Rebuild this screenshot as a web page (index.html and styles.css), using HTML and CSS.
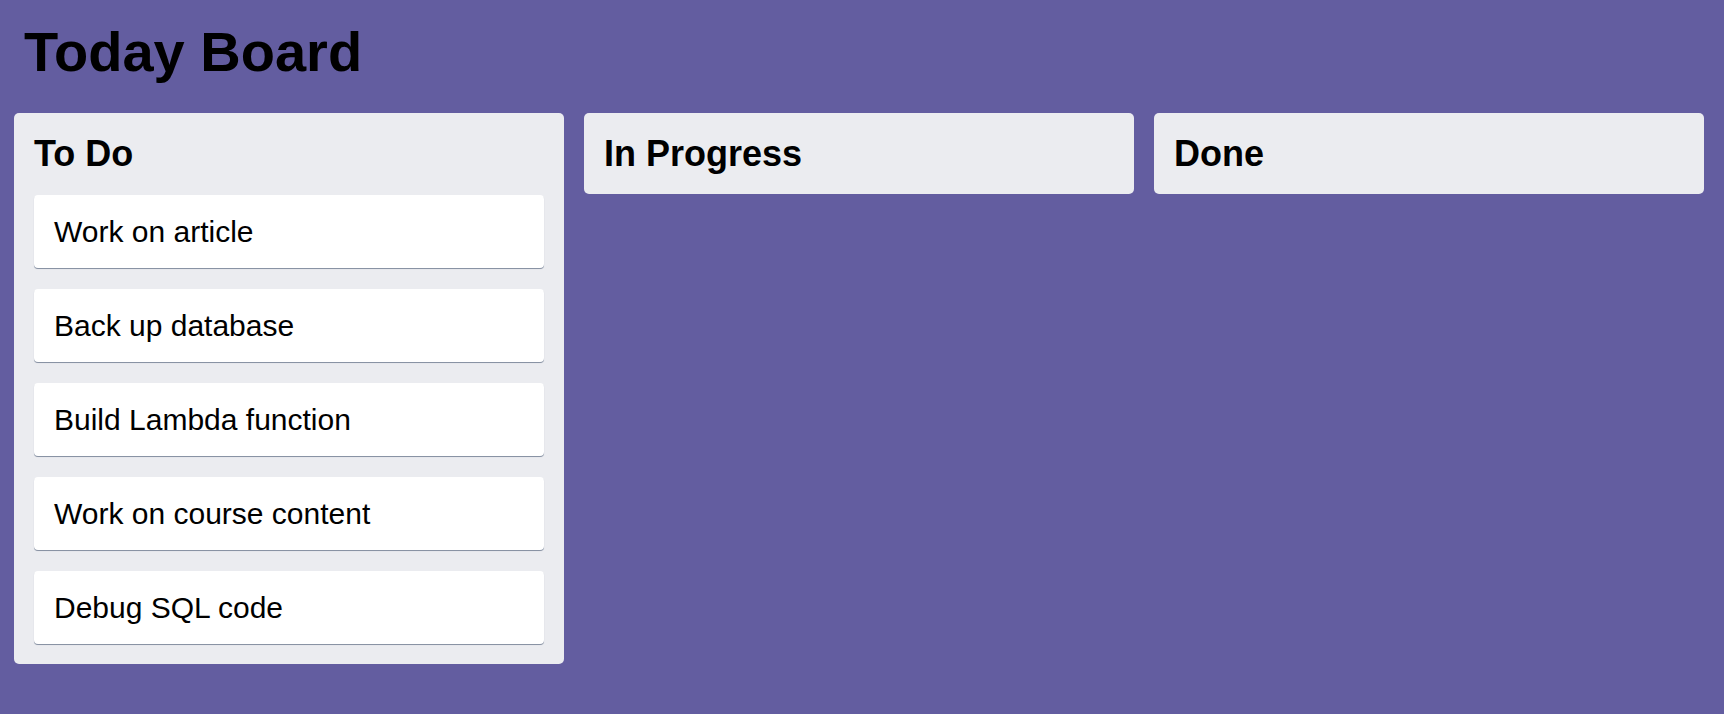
FILE: index.html
```html
<!DOCTYPE html>
<html lang="en">
<head>
<meta charset="utf-8">
<title>Today Board</title>
<link rel="stylesheet" href="styles.css">
</head>
<body>
<div class="page">
  <h1 class="board-title">Today Board</h1>
  <div class="board">
    <section class="column">
      <h2 class="column-title">To Do</h2>
      <div class="cards">
        <div class="card">Work on article</div>
        <div class="card">Back up database</div>
        <div class="card">Build Lambda function</div>
        <div class="card">Work on course content</div>
        <div class="card">Debug SQL code</div>
      </div>
    </section>
    <section class="column">
      <h2 class="column-title">In Progress</h2>
      <div class="cards"></div>
    </section>
    <section class="column">
      <h2 class="column-title">Done</h2>
      <div class="cards"></div>
    </section>
  </div>
</div>
</body>
</html>
```

FILE: styles.css
```css
html, body {
  margin: 0;
  padding: 0;
  background: #635da0;
  min-height: 100%;
}

body {
  font-family: "Liberation Sans", Arial, Helvetica, sans-serif;
  color: #000;
}

.page {
  padding: 19px 20px 0 14px;
}

.board-title {
  margin: 0 0 29px 0;
  padding-left: 10px;
  font-size: 56px;
  font-weight: 700;
  line-height: normal;
}

.board {
  display: flex;
  align-items: flex-start;
  gap: 20px;
}

.column {
  width: 550px;
  box-sizing: border-box;
  background: #ebecf0;
  border-radius: 5px;
  padding: 20px 20px 20px;
}

.column-title {
  margin: 0;
  font-size: 36px;
  font-weight: 700;
  line-height: 41px;
}

.cards {
  display: flex;
  flex-direction: column;
}

.card {
  margin-top: 21px;
  background: #fff;
  border-radius: 4px;
  padding: 19px 20px;
  font-size: 30px;
  line-height: 35px;
  box-shadow: 0 1px 0 rgba(9, 30, 66, 0.3), 0 1px 1px rgba(9, 30, 66, 0.2);
}
```
